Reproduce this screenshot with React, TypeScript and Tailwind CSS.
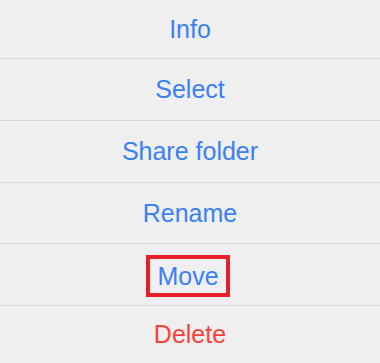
import React from "react";

export default function App() {
  return (
    <div
      className="w-[380px] h-[363px] overflow-hidden bg-[#efefef] flex flex-col"
      style={{ fontFamily: '"Liberation Sans", Arial, sans-serif' }}
    >
      <div className="h-[58px] shrink-0 flex items-center justify-center pt-[1px] text-[25px] text-[#3a80f6]">
        Info
      </div>
      <div className="h-[62px] shrink-0 border-t border-[#d5d5d5] flex items-center justify-center pt-[1px] text-[25px] text-[#3a80f6]">
        Select
      </div>
      <div className="h-[62px] shrink-0 border-t border-[#d5d5d5] flex items-center justify-center pt-[1px] text-[25px] text-[#3a80f6]">
        Share folder
      </div>
      <div className="h-[61px] shrink-0 border-t border-[#d5d5d5] flex items-center justify-center pt-[1px] text-[25px] text-[#3a80f6]">
        Rename
      </div>
      <div className="h-[62px] shrink-0 border-t border-[#d5d5d5] flex items-center justify-center text-[25px] text-[#3a80f6]">
        <span className="inline-block border-4 border-[#e8202a] px-[7px] py-[3px] leading-[28px] translate-x-[-2px] translate-y-[1px]">
          Move
        </span>
      </div>
      <div className="flex-1 border-t border-[#d5d5d5] flex items-center justify-center pt-[1px] text-[25px] text-[#f8413a]">
        Delete
      </div>
    </div>
  );
}
